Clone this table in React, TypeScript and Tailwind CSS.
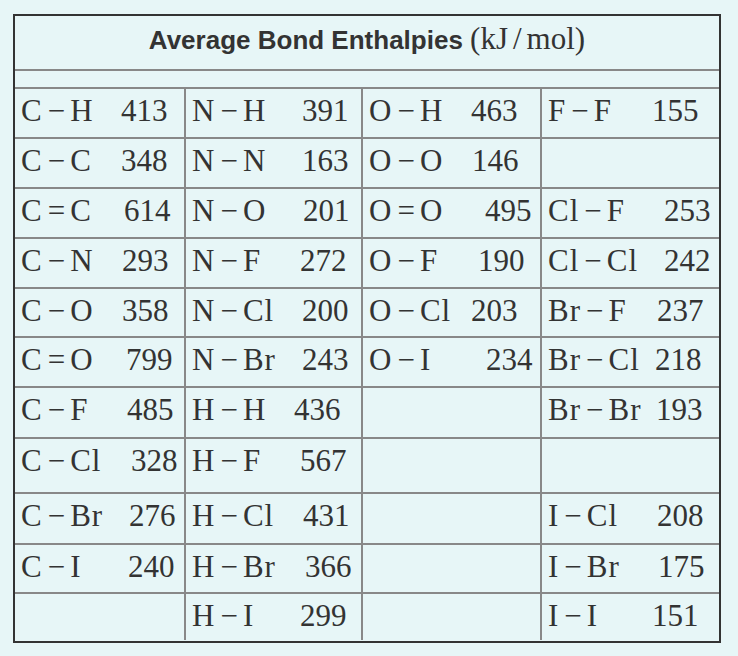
type Cell = { a: string; op: string; b: string; v: string; x: number } | null;

const serif = { fontFamily: '"Liberation Serif", "Times New Roman", serif' };

const c = (a: string, op: string, b: string, v: string, x: number): Cell => ({ a, op, b, v, x });

// each row: four cells, x = where the number starts inside the cell
const rows: { h: string; cells: Cell[] }[] = [
  { h: "h-[50px]", cells: [c("C", "−", "H", "413", 106), c("N", "−", "H", "391", 116), c("O", "−", "H", "463", 108), c("F", "−", "F", "155", 110)] },
  { h: "h-[50px]", cells: [c("C", "−", "C", "348", 106), c("N", "−", "N", "163", 116), c("O", "−", "O", "146", 109), null] },
  { h: "h-[50px]", cells: [c("C", "=", "C", "614", 109), c("N", "−", "O", "201", 117), c("O", "=", "O", "495", 122), c("Cl", "−", "F", "253", 122)] },
  { h: "h-[50px]", cells: [c("C", "−", "N", "293", 107), c("N", "−", "F", "272", 114), c("O", "−", "F", "190", 115), c("Cl", "−", "Cl", "242", 122)] },
  { h: "h-[49px]", cells: [c("C", "−", "O", "358", 107), c("N", "−", "Cl", "200", 116), c("O", "−", "Cl", "203", 108), c("Br", "−", "F", "237", 115)] },
  { h: "h-[50px]", cells: [c("C", "=", "O", "799", 111), c("N", "−", "Br", "243", 116), c("O", "−", "I", "234", 123), c("Br", "−", "Cl", "218", 113)] },
  { h: "h-[51px]", cells: [c("C", "−", "F", "485", 112), c("H", "−", "H", "436", 108), null, c("Br", "−", "Br", "193", 114)] },
  { h: "h-[55px]", cells: [c("C", "−", "Cl", "328", 116), c("H", "−", "F", "567", 114), null, null] },
  { h: "h-[51px]", cells: [c("C", "−", "Br", "276", 114), c("H", "−", "Cl", "431", 117), null, c("I", "−", "Cl", "208", 115)] },
  { h: "h-[49px]", cells: [c("C", "−", "I", "240", 113), c("H", "−", "Br", "366", 119), null, c("I", "−", "Br", "175", 116)] },
  { h: "h-[48px]", cells: [null, c("H", "−", "I", "299", 114), null, c("I", "−", "I", "151", 110)] },
];

const BondCell = ({ cell, last }: { cell: Cell; last: boolean }) => {
  return (
    <div className={`relative h-full ${last ? "" : "border-r-2 border-[#888]"}`}>
      {cell && (
        <div className="absolute inset-0 pt-[6px] pl-[6px] text-[31px] leading-[31px] text-[#333] whitespace-nowrap" style={serif}>
          <span className="tracking-[1px]">{cell.a}</span>
          <span className="mx-[5px]">{cell.op}</span>
          <span className="tracking-[1px]">{cell.b}</span>
          <span className="absolute top-[6px]" style={{ left: cell.x }}>
            {cell.v}
          </span>
        </div>
      )}
    </div>
  );
};

export default function App() {
  return (
    <div className="w-[738px] h-[656px] bg-[#e7f6f7] pt-[14px] pl-[13px]">
      <div className="w-[708px] h-[629px] border-2 border-[#333] flex flex-col">
        <div className="h-[53px] flex justify-center pt-[10px] text-[#333]">
          <span className="text-[26px] leading-[26px] font-bold" style={{ fontFamily: '"Liberation Sans", Arial, sans-serif' }}>
            Average Bond Enthalpies{" "}
            <span className="font-normal text-[31px]" style={serif}>
              (kJ<span className="mx-[5px]">/</span>mol)
            </span>
          </span>
        </div>
        <div className="h-[18px] border-t-2 border-[#888]" />
        {rows.map((row, i) => (
          <div key={i} className={`${row.h} border-t-2 border-[#888] grid grid-cols-[171px_177px_179px_177px]`}>
            {row.cells.map((cell, j) => (
              <BondCell key={j} cell={cell} last={j === 3} />
            ))}
          </div>
        ))}
      </div>
    </div>
  );
}
